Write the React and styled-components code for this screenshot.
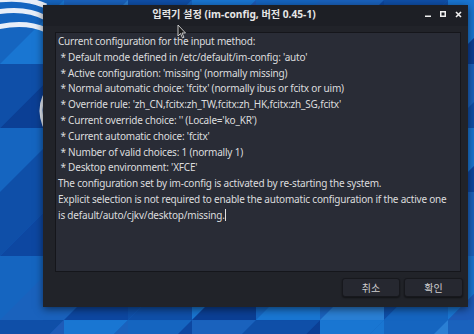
import React from "react";
import styled, { createGlobalStyle } from "styled-components";

const GlobalStyle = createGlobalStyle`
  html, body { margin: 0; padding: 0; width: 474px; height: 334px; overflow: hidden; }
  body { font-family: "Noto Sans", "Noto Sans CJK KR", sans-serif; }
`;

function wallpaperSvg() {
  const shades = ["#1565c0", "#0d47a1", "#1976d2", "#1e5bb8", "#0f4fa8", "#2a7fd4", "#1a62bd", "#0b3f95"];
  const s = 64;
  let polys = "";
  let k = 0;
  for (let r = 0; r < 7; r++) {
    for (let c = 0; c < 9; c++) {
      const x = c * s, y = r * s;
      const a = shades[(r * 3 + c * 5 + k) % shades.length];
      const b = shades[(r * 5 + c * 3 + 2) % shades.length];
      polys += `<polygon points="${x},${y} ${x + s},${y} ${x},${y + s}" fill="${a}"/>`;
      polys += `<polygon points="${x + s},${y} ${x + s},${y + s} ${x},${y + s}" fill="${b}"/>`;
      k++;
    }
  }
  const arcs =
    `<path d="M-20 3 Q 20 -6 46 6" stroke="#e8eef8" stroke-width="5" fill="none"/>` +
    `<path d="M-20 16 Q 20 4 46 18" stroke="#e8eef8" stroke-width="5" fill="none"/>` +
    `<path d="M-20 32 Q 20 18 46 30" stroke="#e8eef8" stroke-width="5" fill="none"/>` +
    `<path d="M44 96 Q 38 110 44 126" stroke="#e8eef8" stroke-width="3" fill="none"/>`;
  const svg = `<svg xmlns="http://www.w3.org/2000/svg" width="474" height="334">${polys}${arcs}</svg>`;
  return `url("data:image/svg+xml;utf8,${encodeURIComponent(svg)}")`;
}

const Desktop = styled.div`
  position: relative;
  width: 474px;
  height: 334px;
  box-sizing: border-box;
  padding: 5px 6px 0 43px;
  background-color: #1565c0;
  background-image: ${wallpaperSvg()};
  background-size: 474px 334px;
`;

const Window = styled.div`
  width: 425px;
  height: 302px;
  box-sizing: border-box;
  background: #212329;
  box-shadow: 0 2px 8px rgba(0, 0, 0, 0.55);
  display: flex;
  flex-direction: column;
`;

const TitleBar = styled.div`
  height: 21px;
  display: flex;
  align-items: center;
  background: #1d1f25;
`;

const Title = styled.div`
  flex: 1;
  text-align: center;
  color: #e6e6e6;
  font-size: 10.2px;
  line-height: 14px;
  font-weight: 700;
  margin-top: -4px;
`;

const Controls = styled.div`
  flex: 0 0 42px;
  box-sizing: border-box;
  display: flex;
  align-items: center;
  gap: 9px;
  padding-right: 6px;
  justify-content: flex-end;
  margin-top: -3px;
`;

const Content = styled.div`
  flex: 1;
  display: flex;
  flex-direction: column;
  padding: 6px 7px 9px 12px;
`;

const TextArea = styled.div`
  height: 240px;
  box-sizing: border-box;
  background: #292c36;
  border: 1px solid #15161b;
  padding: 1px 2px;
  color: #dcdcde;
  font-size: 10px;
  letter-spacing: -0.2px;
  line-height: 15.8px;
  white-space: pre;
  overflow: hidden;
`;

const Caret = styled.span`
  display: inline-block;
  width: 1px;
  height: 12px;
  background: #e0e0e0;
  vertical-align: -2px;
`;

const ButtonRow = styled.div`
  display: flex;
  justify-content: flex-end;
  gap: 4px;
  margin-top: 6px;
  margin-right: -2px;
`;

const Button = styled.div`
  width: ${(p) => p.$w}px;
  height: 19px;
  box-sizing: border-box;
  background: #262830;
  border: 1px solid #17181d;
  border-radius: 3px;
  box-shadow: 0 1px 2px rgba(0, 0, 0, 0.5);
  color: #d0d0d0;
  font-size: 10px;
  display: flex;
  align-items: center;
  justify-content: center;
`;

const Pointer = styled.svg`
  position: absolute;
  left: 177px;
  top: 24px;
`;

const lines = [
  "Current configuration for the input method:",
  " * Default mode defined in /etc/default/im-config: 'auto'",
  " * Active configuration: 'missing' (normally missing)",
  " * Normal automatic choice: 'fcitx' (normally ibus or fcitx or uim)",
  " * Override rule: 'zh_CN,fcitx:zh_TW,fcitx:zh_HK,fcitx:zh_SG,fcitx'",
  " * Current override choice: '' (Locale='ko_KR')",
  " * Current automatic choice: 'fcitx'",
  " * Number of valid choices: 1 (normally 1)",
  " * Desktop environment: 'XFCE'",
  "The configuration set by im-config is activated by re-starting the system.",
  "Explicit selection is not required to enable the automatic configuration if the active one",
];

export default function App() {
  return (
    <>
      <GlobalStyle />
      <Desktop>
        <Window>
          <TitleBar>
            <Title>입력기 설정 (im-config, 버전 0.45-1)</Title>
            <Controls>
              <svg width="6" height="6" viewBox="0 0 6 6">
                <rect x="0" y="4.5" width="6" height="1.5" fill="#f0f0f0" />
              </svg>
              <svg width="6" height="6" viewBox="0 0 6 6">
                <rect x="0.75" y="0.75" width="4.5" height="4.5" fill="none" stroke="#f0f0f0" strokeWidth="1.5" />
              </svg>
              <svg width="7" height="7" viewBox="0 0 7 7">
                <path d="M1 1 L6 6 M6 1 L1 6" stroke="#f0f0f0" strokeWidth="1.6" />
              </svg>
            </Controls>
          </TitleBar>
          <Content>
            <TextArea>
              {lines.join("\n")}
              {"\nis default/auto/cjkv/desktop/missing."}
              <Caret />
            </TextArea>
            <ButtonRow>
              <Button $w={58}>취소</Button>
              <Button $w={59}>확인</Button>
            </ButtonRow>
          </Content>
        </Window>
        <Pointer width="10" height="15" viewBox="0 0 10 15">
          <path d="M1 1 L1 12 L3.5 9.5 L5.5 14 L7 13.3 L5 9 L8.5 9 Z" fill="#1a1a1a" stroke="#d8d8d8" strokeWidth="0.9" />
        </Pointer>
      </Desktop>
    </>
  );
}
